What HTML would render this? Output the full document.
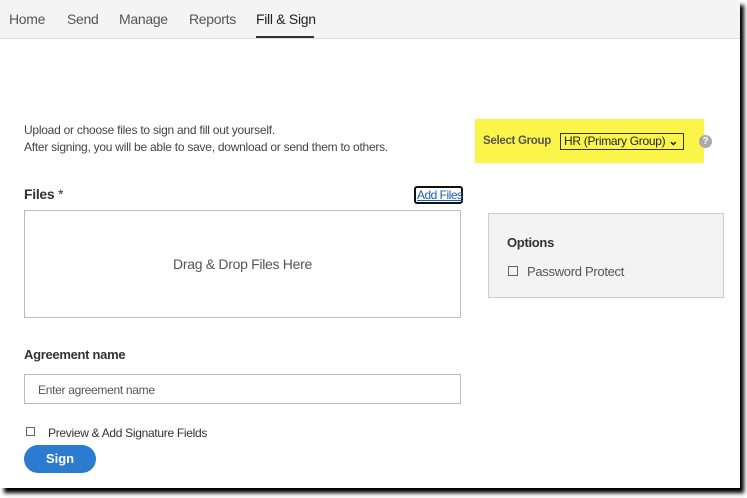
<!DOCTYPE html>
<html><head><style>
body{margin:0;width:747px;height:498px;background:#fff;position:relative;overflow:hidden;font-family:"Liberation Sans",sans-serif;color:#333}
.page{position:absolute;left:0;top:0;width:740px;height:488px;background:#fff;box-shadow:4px 5px 4px #000}
.nav{position:absolute;left:0;top:0;width:740px;height:38px;background:#f4f4f4;border-bottom:1px solid #ddd}
.nav span{position:absolute;top:11px;font-size:14px;color:#555;letter-spacing:-0.3px}
.a{position:absolute;font-size:13px;letter-spacing:-0.3px;white-space:nowrap}
</style></head><body>
<div class="page">
<div class="nav">
<span style="left:9px">Home</span><span style="left:67px">Send</span><span style="left:119px">Manage</span><span style="left:189px">Reports</span><span style="left:256px;color:#222">Fill &amp; Sign</span>
<div style="position:absolute;left:256px;top:36px;width:58px;height:2px;background:#333"></div>
</div>
<div class="a" style="left:24px;top:122px;font-size:12px;letter-spacing:-0.25px;color:#444;line-height:17px">Upload or choose files to sign and fill out yourself.<br>After signing, you will be able to save, download or send them to others.</div>
<div style="position:absolute;left:475px;top:119px;width:229px;height:44px;background:#fbf549"></div>
<div class="a" style="left:483px;top:135px;font-size:11.5px;font-weight:bold;color:#555">Select Group</div>
<div class="a" style="left:560px;top:133px;width:119px;height:15px;border:1px solid #333;font-size:12px;color:#222;line-height:15px;padding-left:3px;box-sizing:content-box">HR (Primary Group) <b>⌄</b></div>
<div style="position:absolute;left:699px;top:135px;width:13px;height:13px;border-radius:50%;background:#aaa;color:#fff;font-size:10px;font-weight:bold;text-align:center;line-height:13px">?</div>
<div class="a" style="left:24px;top:186px;font-size:14px;font-weight:bold;color:#333">Files<span style="font-weight:normal"> *</span></div>
<div class="a" style="left:414px;top:186px;width:43px;border:2px solid #111;border-radius:3px;padding:0 1px;font-size:12px;color:#1a5fb4;text-decoration:underline;letter-spacing:-0.5px">Add Files</div>
<div style="position:absolute;left:24px;top:210px;width:435px;height:106px;border:1px solid #bbb"></div>
<div class="a" style="left:24px;top:256px;width:437px;text-align:center;font-size:14px;color:#555">Drag &amp; Drop Files Here</div>
<div style="position:absolute;left:488px;top:213px;width:236px;height:85px;background:#f3f3f3;border:1px solid #ccc;box-sizing:border-box"></div>
<div class="a" style="left:507px;top:235px;font-size:13px;font-weight:bold;color:#333">Options</div>
<div style="position:absolute;left:508px;top:266px;width:8px;height:8px;border:1.5px solid #666"></div>
<div class="a" style="left:527px;top:264px;font-size:13px;color:#555">Password Protect</div>
<div class="a" style="left:24px;top:347px;font-size:13px;font-weight:bold;color:#333">Agreement name</div>
<div style="position:absolute;left:24px;top:374px;width:435px;height:28px;border:1px solid #bbb"></div>
<div class="a" style="left:38px;top:383px;font-size:12px;color:#555">Enter agreement name</div>
<div style="position:absolute;left:26px;top:427px;width:7px;height:7px;border:1.5px solid #666"></div>
<div class="a" style="left:48px;top:426px;font-size:12px;color:#333">Preview &amp; Add Signature Fields</div>
<div style="position:absolute;left:24px;top:445px;width:72px;height:28px;border-radius:14px;background:#2b7bd1;color:#fff;font-size:13px;font-weight:bold;text-align:center;line-height:28px">Sign</div>
</div>
</body></html>
